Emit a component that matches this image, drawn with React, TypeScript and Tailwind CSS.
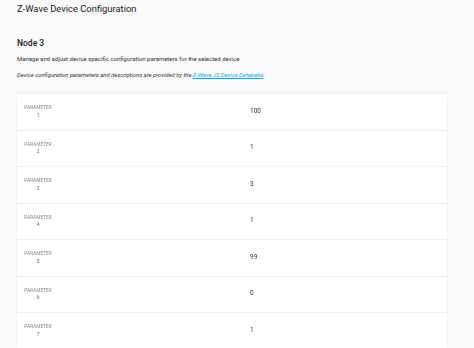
const params = [
  { id: 1, value: "100" },
  { id: 2, value: "1" },
  { id: 3, value: "3" },
  { id: 4, value: "1" },
  { id: 5, value: "99" },
  { id: 6, value: "0" },
  { id: 7, value: "1" },
];

export default function App() {
  return (
    <div className="h-[348px] overflow-hidden bg-[#fafafa] px-[17px] font-['Roboto',sans-serif]">
      <h1 className="text-[9.4px] leading-[18px] text-[#212121]">
        Z-Wave Device Configuration
      </h1>

      <h2 className="mt-[18.7px] text-[8.5px] leading-[12px] font-medium text-[#212121]">
        Node 3
      </h2>
      <p className="mt-[6.6px] text-[6px] leading-[8px] text-[#333]">
        Manage and adjust device specific configuration parameters for the selected device
      </p>
      <p className="mt-[7.4px] text-[5.85px] leading-[8px] italic text-[#333]">
        Device configuration parameters and descriptions are provided by the{" "}
        <a href="#" className="text-[#03a9f4] underline">
          Z-Wave JS Device Database
        </a>
      </p>

      <div className="mt-[15.3px] w-[430px] rounded-[3px] bg-white shadow-[0_0_2px_rgba(0,0,0,0.12)] [will-change:transform]">
        {params.map((p) => (
          <div
            key={p.id}
            className="flex h-[36.5px] items-center border-b border-[#eeeeee] px-[7px]"
          >
            <div className="flex w-[226px] flex-col">
              <span className="w-[28px] text-center text-[4.8px] leading-[6.7px] uppercase text-[#8a8a8a]">
                Parameter
              </span>
              <span className="w-[28px] text-center text-[5.5px] leading-[6.7px] text-[#777]">
                {p.id}
              </span>
            </div>
            <div className="text-[6.5px] text-[#333]">{p.value}</div>
          </div>
        ))}
      </div>
    </div>
  );
}
